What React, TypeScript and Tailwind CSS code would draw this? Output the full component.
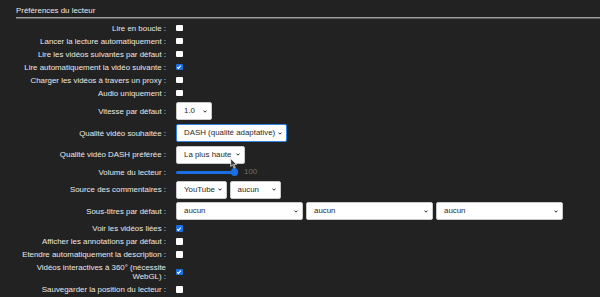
import React from "react";

const font = { fontFamily: '"Liberation Sans", Arial, sans-serif' };

function Check({ checked = false }: { checked?: boolean }) {
  if (checked)
    return (
      <span className="flex h-[6.5px] w-[6.5px] items-center justify-center rounded-[1px] bg-[#1a6fe3]">
        <svg viewBox="0 0 10 10" className="h-[6px] w-[6px]">
          <path d="M2 5.4 L4.1 7.4 L8 2.6" fill="none" stroke="#fff" strokeWidth="1.8" />
        </svg>
      </span>
    );
  return <span className="block h-[6.5px] w-[6.5px] rounded-[1px] bg-white" />;
}

function Select({ value, width, focus = false }: { value: string; width: string; focus?: boolean }) {
  return (
    <div
      className={`flex h-[18px] shrink-0 items-center justify-between rounded-[2px] bg-white pl-[7px] pr-[4px] text-[7.9px] text-[#2a2a2a] ${width} ${
        focus ? "border border-[#2d86e6]" : "border border-[#c9c9c9]"
      }`}
    >
      <span className="whitespace-nowrap">{value}</span>
      <svg viewBox="0 0 8 6" className="h-[3px] w-[4px] shrink-0">
        <path d="M1 1.2 L4 4.4 L7 1.2" fill="none" stroke="#222" strokeWidth="1.9" />
      </svg>
    </div>
  );
}

function Row({ label, h, children }: { label: React.ReactNode; h: string; children: React.ReactNode }) {
  return (
    <div className={`flex items-center ${h}`}>
      <div className="w-[150px] shrink-0 text-right leading-[9px] text-[#e8e8e8]">{label}</div>
      <div className="ml-[10px] flex items-center gap-[3px]">{children}</div>
    </div>
  );
}

export default function App() {
  return (
    <div className="relative h-[297px] w-[600px] overflow-hidden bg-[#222222] text-[7.9px]" style={font}>
      <div className="pl-[16px]">
        <div className="pt-[6px]">
          <h2 className="h-[11px] leading-[10px] text-[#e8e8e8]">Préférences du lecteur</h2>
          <div className="h-[1px] bg-[#a0a0a0]" />
          <div className="h-[1px] bg-[#5a5a5a]" />
        </div>

        <div className="mt-[2.5px] flex flex-col">
          <Row label="Lire en boucle :" h="h-[13px]"><Check /></Row>
          <Row label="Lancer la lecture automatiquement :" h="h-[13px]"><Check /></Row>
          <Row label="Lire les vidéos suivantes par défaut :" h="h-[13px]"><Check /></Row>
          <Row label="Lire automatiquement la vidéo suivante :" h="h-[13px]"><Check checked /></Row>
          <Row label="Charger les vidéos à travers un proxy :" h="h-[13px]"><Check /></Row>
          <Row label="Audio uniquement :" h="h-[13px]"><Check /></Row>

          <Row label="Vitesse par défaut :" h="h-[23px]">
            <Select value="1.0" width="w-[35.5px]" />
          </Row>
          <Row label="Qualité vidéo souhaitée :" h="h-[21px]">
            <Select value="DASH (qualité adaptative)" width="w-[110.5px]" focus />
          </Row>
          <Row label="Qualité vidéo DASH préférée :" h="h-[22px]">
            <Select value="La plus haute" width="w-[69px]" />
          </Row>
          <Row label="Volume du lecteur :" h="h-[13.5px]">
            <div className="flex items-center">
              <div className="relative flex h-[8px] w-[62px] items-center">
                <div className="h-[3px] w-full rounded-full bg-[#1a6fe3]" />
                <div className="absolute right-0 h-[7.5px] w-[7.5px] rounded-full bg-[#1a6fe3]" />
              </div>
              <span className="ml-[6px] text-[#6f6f6f]">100</span>
            </div>
          </Row>
          <Row label="Source des commentaires :" h="h-[21px]">
            <Select value="YouTube" width="w-[50.5px]" />
            <Select value="aucun" width="w-[51.5px]" />
          </Row>
          <Row label="Sous-titres par défaut :" h="h-[22px]">
            <Select value="aucun" width="w-[127px]" />
            <Select value="aucun" width="w-[127px]" />
            <Select value="aucun" width="w-[127px]" />
          </Row>

          <Row label="Voir les vidéos liées :" h="h-[13px]"><Check checked /></Row>
          <Row label="Afficher les annotations par défaut :" h="h-[13px]"><Check /></Row>
          <Row label="Etendre automatiquement la description :" h="h-[13px]"><Check /></Row>
          <Row label={<>Vidéos interactives à 360° (nécessite WebGL)&nbsp;:</>} h="h-[22px]"><Check checked /></Row>
          <Row label="Sauvegarder la position du lecteur :" h="h-[13px]"><Check /></Row>
        </div>
      </div>

      {/* mouse pointer over the DASH select */}
      <svg viewBox="0 0 12 18" className="absolute left-[229.5px] top-[157.5px] h-[11px] w-[7.5px]">
        <path d="M1 1 L1 14 L4 11 L6.5 16.5 L8.5 15.5 L6 10.5 L10.5 10.5 Z" fill="#3a3a3a" stroke="#fff" strokeWidth="1.1" />
      </svg>
    </div>
  );
}
